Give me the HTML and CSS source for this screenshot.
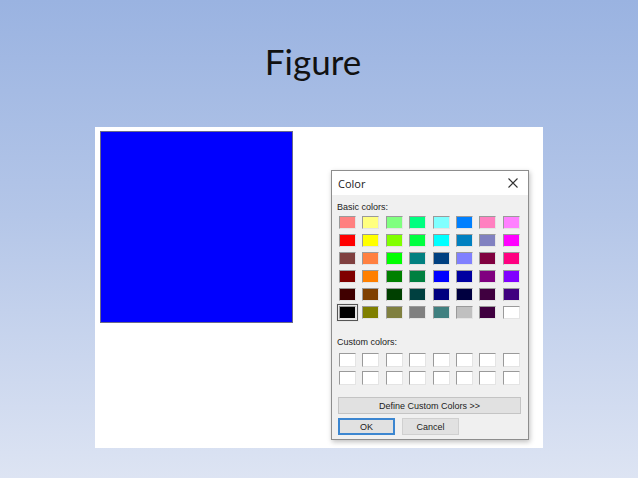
FILE: index.html
```html
<!DOCTYPE html>
<html>
<head>
<meta charset="utf-8">
<link rel="stylesheet" href="styles.css">
</head>
<body>
<div class="slide">
  <h1 class="title">Figure</h1>
  <div class="panel">
    <div class="blue"></div>
    <div class="dialog">
      <div class="titlebar">
        <span class="dtitle">Color</span>
        <svg class="close" width="10" height="10" viewBox="0 0 10 10"><path d="M0.5 0.5 L9.5 9.5 M9.5 0.5 L0.5 9.5" stroke="#333" stroke-width="1.1" fill="none"/></svg>
      </div>
      <div class="dbody">
        <div class="label">Basic colors:</div>
        <div class="grid basic">
          <i style="background:#ff8080"></i><i style="background:#ffff80"></i><i style="background:#80ff80"></i><i style="background:#00ff80"></i><i style="background:#80ffff"></i><i style="background:#0080ff"></i><i style="background:#ff80c0"></i><i style="background:#ff80ff"></i>
          <i style="background:#ff0000"></i><i style="background:#ffff00"></i><i style="background:#80ff00"></i><i style="background:#00ff40"></i><i style="background:#00ffff"></i><i style="background:#0080c0"></i><i style="background:#8080c0"></i><i style="background:#ff00ff"></i>
          <i style="background:#804040"></i><i style="background:#ff8040"></i><i style="background:#00ff00"></i><i style="background:#008080"></i><i style="background:#004080"></i><i style="background:#8080ff"></i><i style="background:#800040"></i><i style="background:#ff0080"></i>
          <i style="background:#800000"></i><i style="background:#ff8000"></i><i style="background:#008000"></i><i style="background:#008040"></i><i style="background:#0000ff"></i><i style="background:#0000a0"></i><i style="background:#800080"></i><i style="background:#8000ff"></i>
          <i style="background:#400000"></i><i style="background:#804000"></i><i style="background:#004000"></i><i style="background:#004040"></i><i style="background:#000080"></i><i style="background:#000040"></i><i style="background:#400040"></i><i style="background:#400080"></i>
          <i class="sel" style="background:#000000"></i><i style="background:#808000"></i><i style="background:#808040"></i><i style="background:#808080"></i><i style="background:#408080"></i><i style="background:#c0c0c0"></i><i style="background:#400040"></i><i style="background:#ffffff"></i>
        </div>
        <div class="label custom-label">Custom colors:</div>
        <div class="grid custom">
          <i></i><i></i><i></i><i></i><i></i><i></i><i></i><i></i>
          <i></i><i></i><i></i><i></i><i></i><i></i><i></i><i></i>
        </div>
        <div class="btn define">Define Custom Colors &gt;&gt;</div>
        <div class="btnrow">
          <div class="btn ok">OK</div>
          <div class="btn cancel">Cancel</div>
        </div>
      </div>
    </div>
  </div>
</div>
</body>
</html>
```
FILE: styles.css
```css
html, body {
  margin: 0;
  padding: 0;
}
body {
  width: 638px;
  height: 478px;
  overflow: hidden;
  background: linear-gradient(to bottom, #9ab3e1 0%, #b4c6e8 45%, #dde4f3 100%);
}
.slide {
  display: flex;
  flex-direction: column;
  align-items: center;
}
.title {
  margin: 0;
  padding: 39px 12px 0 0;
  height: 127px;
  box-sizing: border-box;
  font-family: Lato, "Open Sans", sans-serif;
  font-weight: normal;
  font-size: 35px;
  line-height: 44px;
  color: #111;
  text-align: center;
}
.panel {
  width: 448px;
  height: 321px;
  background: #fff;
  display: flex;
  align-items: flex-start;
  box-sizing: border-box;
  padding: 4px 0 0 5px;
}
.blue {
  width: 193px;
  height: 192px;
  box-sizing: border-box;
  background: #0000ff;
  border: 1px solid #6a6a8a;
}
.dialog {
  margin-left: 38px;
  margin-top: 39px;
  width: 198px;
  height: 270px;
  box-sizing: border-box;
  border: 1px solid #8d8d8d;
  background: #f0f0f0;
  box-shadow: 1px 2px 5px rgba(0,0,0,0.25);
  display: flex;
  flex-direction: column;
  font-family: "Liberation Sans", Arial, sans-serif;
}
.titlebar {
  height: 24px;
  background: #fff;
  display: flex;
  align-items: center;
  justify-content: space-between;
  padding: 0 10px 0 6px;
}
.dtitle {
  font-family: "Open Sans", "Noto Sans", sans-serif;
  font-size: 11px;
  color: #222;
}
.close {
  display: block;
}
.dbody {
  padding: 6px 7px 0 5px;
  display: flex;
  flex-direction: column;
}
.label {
  font-size: 9px;
  line-height: 12px;
  color: #222;
  height: 12px;
}
.grid {
  display: grid;
  grid-template-columns: repeat(8, 17px);
  column-gap: 6.4px;
  margin-left: 2px;
}
.grid i {
  display: block;
  width: 17px;
  height: 13px;
  box-sizing: border-box;
  border: 1px solid;
  border-color: #9a9a9a #e4e4e4 #e4e4e4 #9a9a9a;
}
.basic {
  margin-top: 3px;
  row-gap: 5px;
}
.basic i.sel {
  outline: 1px solid #555;
  outline-offset: 1px;
  box-shadow: 0 0 0 3px #e8e8e8;
}
.custom-label {
  margin-top: 17px;
}
.custom {
  margin-top: 5px;
  row-gap: 4px;
}
.custom i {
  background: #fff;
  height: 14px;
}
.btn {
  box-sizing: border-box;
  height: 17px;
  background: #e1e1e1;
  border: 1px solid #c4c4c4;
  font-size: 9px;
  color: #222;
  display: flex;
  align-items: center;
  justify-content: center;
}
.define {
  margin-top: 12px;
  margin-left: 1px;
  width: 183px;
}
.btnrow {
  display: flex;
  gap: 7px;
  margin-top: 4px;
  margin-left: 1px;
}
.ok {
  width: 57px;
  border: 2px solid #3c86d0;
}
.cancel {
  width: 57px;
  border-color: #d0d0d0;
}
```
